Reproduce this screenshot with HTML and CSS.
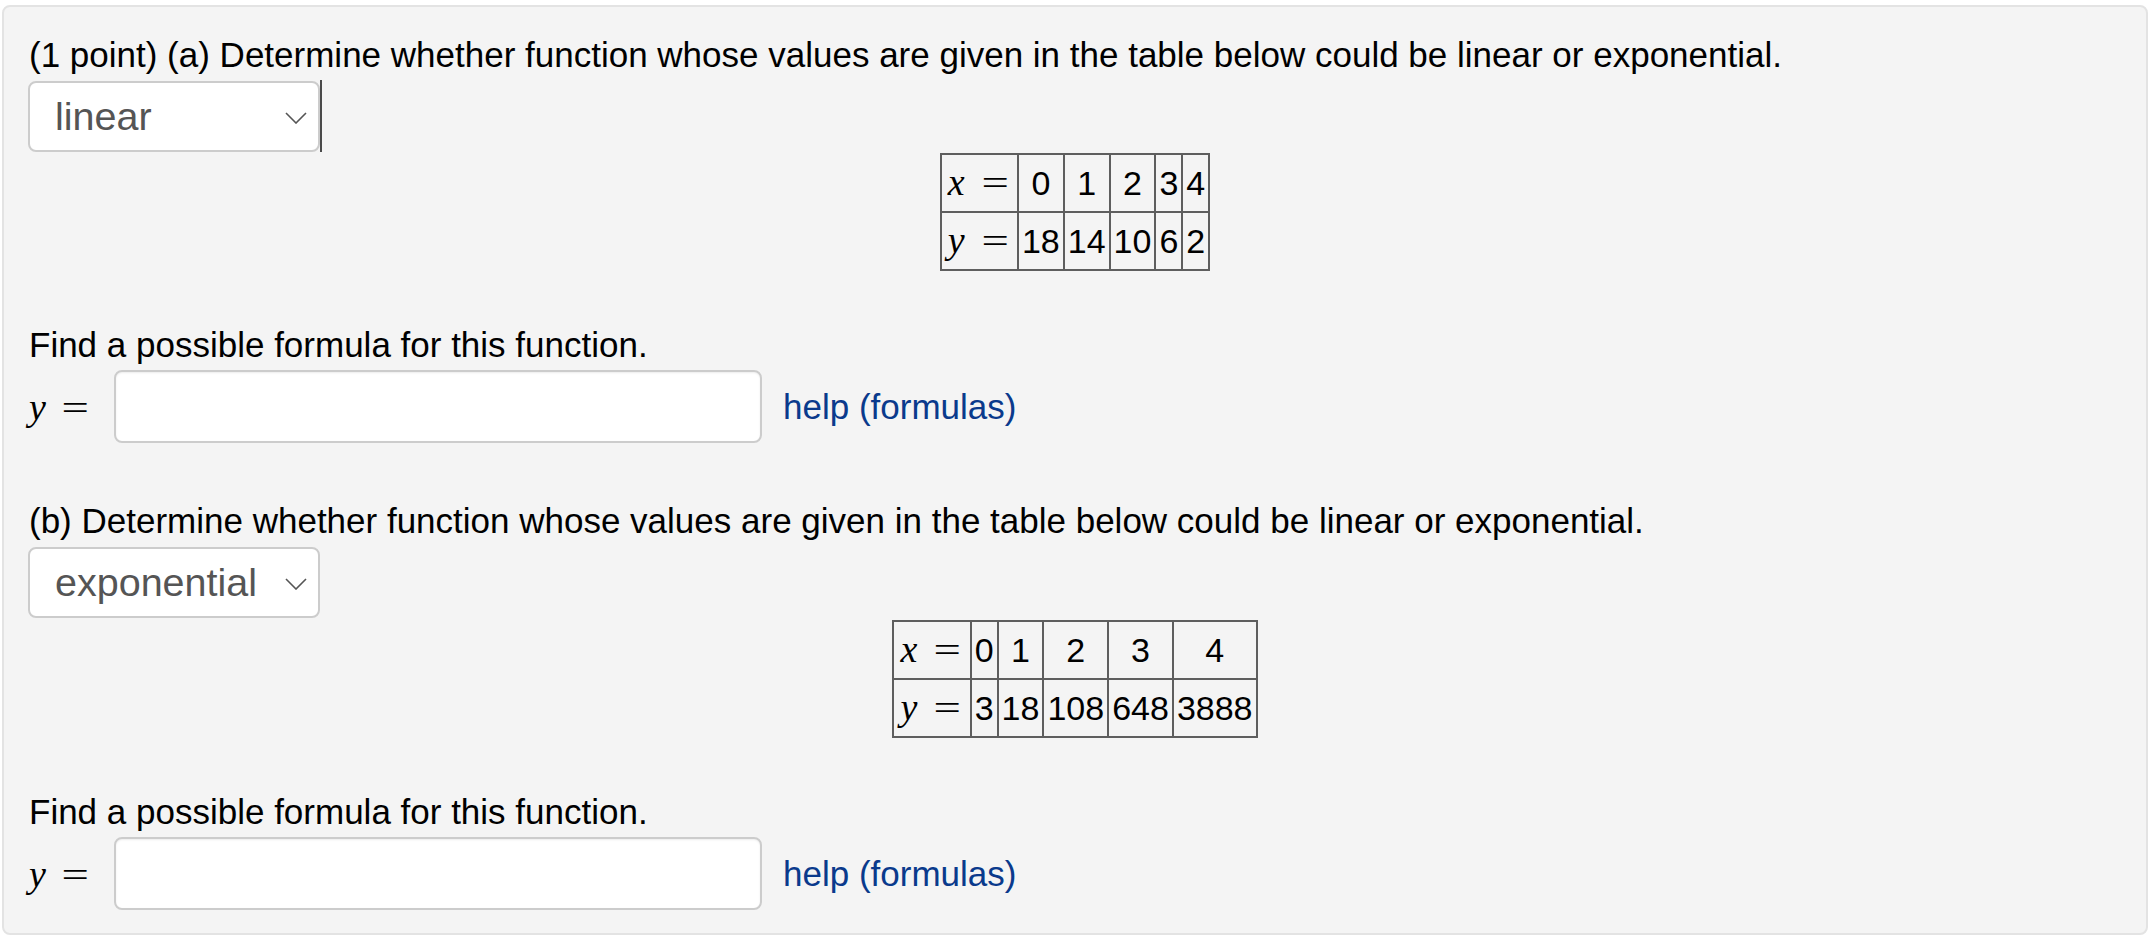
FILE: index.html
```html
<!DOCTYPE html>
<html lang="en">
<head>
<meta charset="utf-8">
<title>Linear or exponential</title>
<link rel="stylesheet" href="styles.css">
</head>
<body>
<div class="card">
  <p class="text">(1 point) (a) Determine whether function whose values are given in the table below could be linear or exponential.</p>
  <div class="select-row">
    <div class="select"><span>linear</span><svg class="chev" width="22" height="12" viewBox="0 0 22 12"><polyline points="1,1 11,11 21,1" fill="none" stroke="#555" stroke-width="1.6"/></svg></div>
    <div class="cursor"></div>
  </div>
  <div class="table-wrap">
    <table class="vals">
      <tr><td class="lab"><span class="mi">x</span><span class="mo">=</span></td><td>0</td><td>1</td><td>2</td><td>3</td><td>4</td></tr>
      <tr><td class="lab"><span class="mi">y</span><span class="mo">=</span></td><td>18</td><td>14</td><td>10</td><td>6</td><td>2</td></tr>
    </table>
  </div>
  <p class="text find">Find a possible formula for this function.</p>
  <div class="answer-row">
    <span class="math"><span class="mi">y</span><span class="mo">=</span></span>
    <input class="answer" type="text" aria-label="answer a">
    <a class="help" href="#">help (formulas)</a>
  </div>

  <p class="text partb">(b) Determine whether function whose values are given in the table below could be linear or exponential.</p>
  <div class="select-row">
    <div class="select"><span>exponential</span><svg class="chev" width="22" height="12" viewBox="0 0 22 12"><polyline points="1,1 11,11 21,1" fill="none" stroke="#555" stroke-width="1.6"/></svg></div>
  </div>
  <div class="table-wrap table-wrap-b">
    <table class="vals">
      <tr><td class="lab"><span class="mi">x</span><span class="mo">=</span></td><td>0</td><td>1</td><td>2</td><td>3</td><td>4</td></tr>
      <tr><td class="lab"><span class="mi">y</span><span class="mo">=</span></td><td>3</td><td>18</td><td>108</td><td>648</td><td>3888</td></tr>
    </table>
  </div>
  <p class="text find">Find a possible formula for this function.</p>
  <div class="answer-row">
    <span class="math"><span class="mi">y</span><span class="mo">=</span></span>
    <input class="answer" type="text" aria-label="answer b">
    <a class="help" href="#">help (formulas)</a>
  </div>
</div>
</body>
</html>
```
FILE: styles.css
```css
html, body {
  margin: 0;
  padding: 0;
  background: #ffffff;
}

body {
  font-family: "Liberation Sans", Arial, sans-serif;
  color: #000;
}

.card {
  margin: 5px 7px 0 2px;
  border: 2px solid #e3e3e3;
  border-radius: 8px;
  background: #f4f4f4;
  padding: 28px 25px 23px 25px;
}

.text {
  margin: 0;
  font-size: 35px;
  line-height: 40px;
}

.find {
  margin-top: 54px;
}

.partb {
  margin-top: 58px;
}

.select-row {
  display: flex;
  align-items: stretch;
  margin-top: 6px;
  height: 71px;
}

.select {
  box-sizing: border-box;
  width: 292px;
  height: 71px;
  margin-left: -1px;
  border: 2px solid #cccccc;
  border-radius: 8px;
  background: #ffffff;
  display: flex;
  align-items: center;
  justify-content: space-between;
  padding: 0 11px 0 25px;
  font-size: 39.5px;
  color: #555555;
}

.chev {
  display: block;
  margin-top: 2px;
}

.cursor {
  width: 2px;
  height: 72px;
  margin-top: -1px;
  background: #4a4a4a;
}

.table-wrap {
  display: flex;
  justify-content: center;
  margin-top: 1px;
}

.table-wrap-b {
  margin-top: 2px;
}

.vals {
  border-collapse: collapse;
  font-size: 34px;
}

.vals td {
  border: 2px solid #5e5e5e;
  padding: 7px 3px;
  line-height: 41px;
  text-align: center;
  white-space: nowrap;
}

.vals td.lab {
  padding: 7px 6px 7px 6px;
  text-align: left;
}

.mi {
  font-family: "Liberation Serif", "Times New Roman", serif;
  font-style: italic;
  font-size: 38px;
}

.mo {
  display: inline-block;
  font-family: "Liberation Serif", "Times New Roman", serif;
  font-size: 36px;
  transform: scaleX(1.35);
  margin-left: 20px;
  margin-right: 6px;
}

.answer-row {
  display: flex;
  align-items: center;
  margin-top: 5px;
  height: 73px;
}

.math {
  display: inline-flex;
  align-items: baseline;
  width: 62px;
  white-space: nowrap;
}

.math .mo {
  margin-left: 19px;
  margin-right: 4px;
}

.answer {
  box-sizing: border-box;
  width: 648px;
  height: 73px;
  margin: 0 0 0 23px;
  border: 2px solid #cccccc;
  border-radius: 8px;
  background: #ffffff;
  box-shadow: inset 0 1px 2px rgba(0, 0, 0, 0.08);
  font-size: 35px;
  padding: 0 12px;
  outline: none;
}

.help {
  margin-left: 21px;
  font-size: 35px;
  color: #0a3a8c;
  text-decoration: none;
}
```
